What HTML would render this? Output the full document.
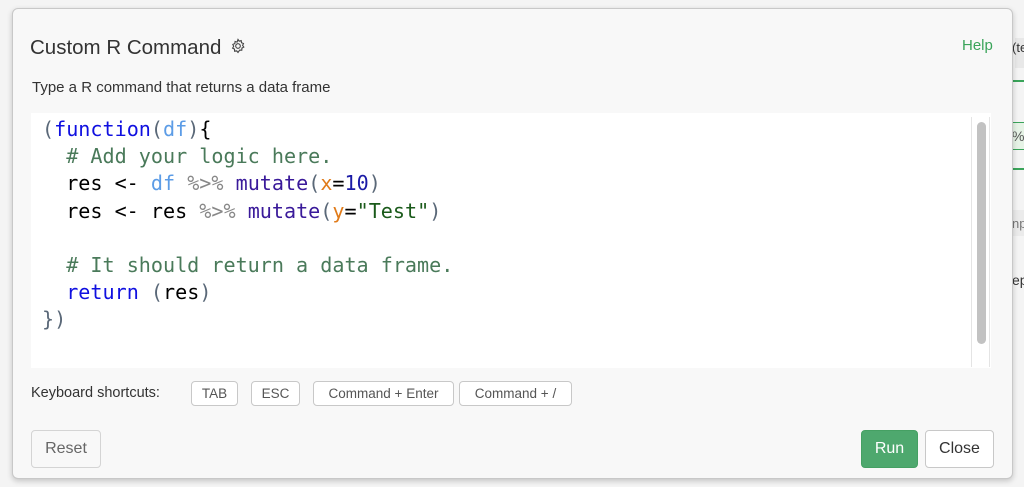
<!DOCTYPE html>
<html><head><meta charset="utf-8"><style>
*{margin:0;padding:0;box-sizing:border-box}
body{width:1024px;height:487px;overflow:hidden;background:#f4f4f4;font-family:"Liberation Sans",Arial,sans-serif;position:relative}
.bgl{position:absolute;background:#e2e2e2}
.dlg{position:absolute;left:12px;top:8px;width:1001px;height:471px;background:#f8f8f8;border:1px solid #c8c8c8;border-radius:6px;box-shadow:0 2px 6px rgba(0,0,0,.2)}
.title{position:absolute;left:17px;top:27px;font-size:20.5px;color:#333}
.help{position:absolute;left:949px;top:28px;font-size:15px;color:#3aa45a}
.sub{position:absolute;left:19px;top:70px;font-size:15px;color:#333}
.code{position:absolute;left:18px;top:104px;width:960px;height:255px;background:#fff}
.code pre{position:absolute;left:11px;top:3px;font-family:"DejaVu Sans Mono","Liberation Mono",monospace;font-size:20.1px;line-height:27.2px;color:#000}
.sb{position:absolute;left:940px;top:4px;width:19px;height:250px;border-left:1px solid #e4e4e4;border-right:1px solid #e4e4e4}
.th{position:absolute;left:5px;top:5px;width:9px;height:222px;background:#c2c2c2;border-radius:5px}
.p{color:#5a6878}.k{color:#1010e0}.v{color:#5c9ce6}.o{color:#888}.f{color:#3a1a9a}.x{color:#e07b1a}.n{color:#1a1aa6}.s{color:#1a5a1a}.c{color:#4a7a5a}
.ks{position:absolute;left:18px;top:376px;font-size:14.5px;color:#333}
.key{position:absolute;top:372px;height:25px;border:1px solid #c8c8c8;border-radius:4px;background:#fff;font-size:13.5px;color:#555;text-align:center;line-height:23px}
.btn{position:absolute;top:421px;height:38px;border-radius:4px;font-size:16px;text-align:center;line-height:36px}
</style></head><body>
<div class="bgl" style="left:1015px;top:38px;width:9px;height:30px;background:#e8e8e8"></div>
<div style="position:absolute;left:1012px;top:40px;font-size:13px;color:#333">(te</div>
<div class="bgl" style="left:1012px;top:80px;width:12px;height:2px;background:#3aa45a"></div>
<div class="bgl" style="left:1012px;top:122px;width:12px;height:28px;background:#e6f3e6;border-top:1px solid #3aa45a;border-bottom:1px solid #3aa45a"></div>
<div style="position:absolute;left:1012px;top:128px;font-size:14px;color:#555">%</div>
<div class="bgl" style="left:1012px;top:168px;width:12px;height:2px;background:#3aa45a"></div>
<div class="bgl" style="left:1012px;top:210px;width:12px;height:26px;background:#ebebeb"></div>
<div style="position:absolute;left:1012px;top:216px;font-size:13px;color:#777">np</div>
<div style="position:absolute;left:1012px;top:272px;font-size:14px;color:#333">ep</div>
<div class="dlg">
<div class="title">Custom R Command <svg width="16" height="16" viewBox="0 0 16 16" style="vertical-align:0;margin-left:3px"><g fill="none" stroke="#444" stroke-width="1.1"><circle cx="8" cy="8" r="2.3"/><path d="M8 1.5l1.2 1.7 2-.6.3 2.1 2 .8-.9 1.9 1.2 1.7-1.9 1-.1 2.1-2.1-.1L8 14.5l-1.3-1.6-2.1.3-.1-2.1-1.9-1 1.1-1.8-.9-1.9 2-.8.3-2.1 2 .6z"/></g></svg></div>
<div class="help">Help</div>
<div class="sub">Type a R command that returns a data frame</div>
<div class="code"><pre><span class="p">(</span><span class="k">function</span><span class="p">(</span><span class="v">df</span><span class="p">)</span>{
  <span class="c"># Add your logic here.</span>
  res &lt;- <span class="v">df</span> <span class="o">%&gt;%</span> <span class="f">mutate</span><span class="p">(</span><span class="x">x</span>=<span class="n">10</span><span class="p">)</span>
  res &lt;- res <span class="o">%&gt;%</span> <span class="f">mutate</span><span class="p">(</span><span class="x">y</span>=<span class="s">"Test"</span><span class="p">)</span>

  <span class="c"># It should return a data frame.</span>
  <span class="k">return</span> <span class="p">(</span>res<span class="p">)</span>
<span class="p">})</span></pre>
<div class="sb"><div class="th"></div></div></div>
<div class="ks">Keyboard shortcuts:</div>
<div class="key" style="left:178px;width:47px">TAB</div>
<div class="key" style="left:238px;width:49px">ESC</div>
<div class="key" style="left:300px;width:141px">Command + Enter</div>
<div class="key" style="left:446px;width:113px">Command + /</div>
<div class="btn" style="left:18px;width:70px;border:1px solid #d4d4d4;color:#666;background:#f8f8f8">Reset</div>
<div class="btn" style="left:848px;width:57px;background:#4ea86e;border:1px solid #45a063;color:#fff">Run</div>
<div class="btn" style="left:912px;width:69px;background:#fff;border:1px solid #c8c8c8;color:#333">Close</div>
</div>
</body></html>
